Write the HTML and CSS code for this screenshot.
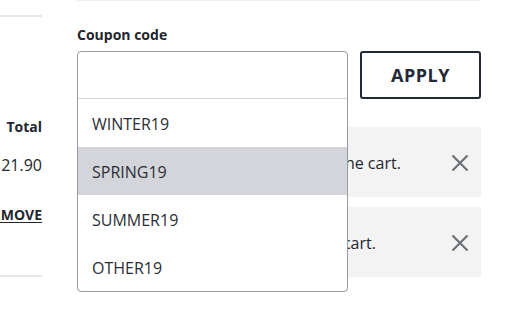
FILE: index.html
```html
<!DOCTYPE html>
<html lang="en">
<head>
<meta charset="utf-8">
<title>Cart</title>
<link rel="stylesheet" href="styles.css">
</head>
<body>
<div class="page">
  <aside class="summary">
    <div class="summary-row total-label"><span>Total</span></div>
    <div class="summary-row total-value"><span>$121.90</span></div>
    <div class="summary-row remove"><a href="#" class="remove-link">REMOVE</a></div>
  </aside>
  <main class="coupon">
    <label class="coupon-label" for="coupon">Coupon code</label>
    <div class="coupon-row">
      <div class="combo">
        <div class="combo-panel">
          <div class="combo-input"><input id="coupon" type="text" class="combo-field"></div>
          <ul class="combo-list">
            <li class="combo-option">WINTER19</li>
            <li class="combo-option is-active">SPRING19</li>
            <li class="combo-option">SUMMER19</li>
            <li class="combo-option">OTHER19</li>
          </ul>
        </div>
      </div>
      <button class="apply-btn" type="button">APPLY</button>
    </div>
    <div class="alerts">
      <div class="alert">
        <p class="alert-text">Coupon code has been added to the cart.</p>
        <button class="alert-close" type="button" aria-label="Close">
          <svg width="18" height="18" viewBox="0 0 18 18"><path d="M1.5 1.5 L16.5 16.5 M16.5 1.5 L1.5 16.5" stroke="#6d7078" stroke-width="2.2" fill="none"/></svg>
        </button>
      </div>
      <div class="alert">
        <p class="alert-text">Your item was removed from the cart.</p>
        <button class="alert-close" type="button" aria-label="Close">
          <svg width="18" height="18" viewBox="0 0 18 18"><path d="M1.5 1.5 L16.5 16.5 M16.5 1.5 L1.5 16.5" stroke="#6d7078" stroke-width="2.2" fill="none"/></svg>
        </button>
      </div>
    </div>
  </main>
</div>
</body>
</html>
```

FILE: styles.css
```css
* { box-sizing: border-box; }
html, body { margin: 0; padding: 0; background: #fff; }
body {
  font-family: "Open Sans", "Noto Sans", sans-serif;
  color: #23262e;
  width: 523px;
  height: 327px;
  overflow: hidden;
}
.page {
  display: flex;
  gap: 35px;
  align-items: flex-start;
}
.summary {
  flex: 0 0 42px;
  width: 42px;
  margin-top: 15px;
  border-top: 2px solid #e7e7e9;
  border-bottom: 2px solid #e7e7e9;
  padding-top: 100px;
  padding-bottom: 50px;
  display: flex;
  flex-direction: column;
}
.summary-row {
  display: flex;
  justify-content: flex-end;
  white-space: nowrap;
}
.total-label { font-size: 14px; line-height: 20px; font-weight: 700; }
.total-value { font-size: 16px; line-height: 24px; margin-top: 16px; }
.remove { margin-top: 28px; font-size: 14px; line-height: 20px; font-weight: 700; }
.remove-link { color: #23262e; text-decoration: underline; text-underline-offset: 2px; }
.coupon {
  flex: 0 0 404px;
  width: 404px;
  border-top: 1px solid #efeff0;
  padding-top: 24px;
}
.coupon-label {
  display: block;
  font-size: 14px;
  line-height: 20px;
  font-weight: 700;
  color: #23262e;
  margin-bottom: 6px;
}
.coupon-row {
  display: flex;
  gap: 12px;
}
.combo {
  position: relative;
  flex: 0 0 271px;
  height: 48px;
}
.combo-panel {
  position: absolute;
  top: 0;
  left: 0;
  width: 271px;
  border: 1px solid #989ba2;
  border-radius: 4px;
  background: #fff;
  z-index: 5;
  overflow: hidden;
}
.combo-input {
  height: 47px;
  border-bottom: 1px solid #d2d5db;
}
.combo-field {
  width: 100%;
  height: 100%;
  border: 0;
  outline: none;
  background: transparent;
  font: inherit;
  padding: 0 14px;
}
.combo-list {
  list-style: none;
  margin: 0;
  padding: 0;
}
.combo-option {
  height: 48px;
  display: flex;
  align-items: center;
  padding: 2px 14px 0;
  font-size: 16px;
  line-height: 24px;
  color: #2b2e36;
}
.combo-option.is-active { background: #d3d5da; }
.apply-btn {
  flex: 0 0 121px;
  height: 48px;
  border: 2px solid #232838;
  border-radius: 3px;
  background: #fff;
  color: #232838;
  font-family: "Open Sans", "Noto Sans", sans-serif;
  font-size: 18px;
  font-weight: 700;
  letter-spacing: 0.5px;
  padding: 0;
}
.alerts {
  margin-top: 28px;
  display: flex;
  flex-direction: column;
  gap: 10px;
}
.alert {
  height: 70px;
  background: #f3f3f4;
  display: flex;
  align-items: center;
  justify-content: space-between;
  padding: 2px 12px 0 16px;
}
.alert-text {
  margin: 0;
  font-size: 16px;
  line-height: 24px;
  color: #23262e;
  white-space: nowrap;
}
.alert-close {
  border: 0;
  background: transparent;
  padding: 0;
  width: 18px;
  height: 18px;
  display: flex;
}
```
